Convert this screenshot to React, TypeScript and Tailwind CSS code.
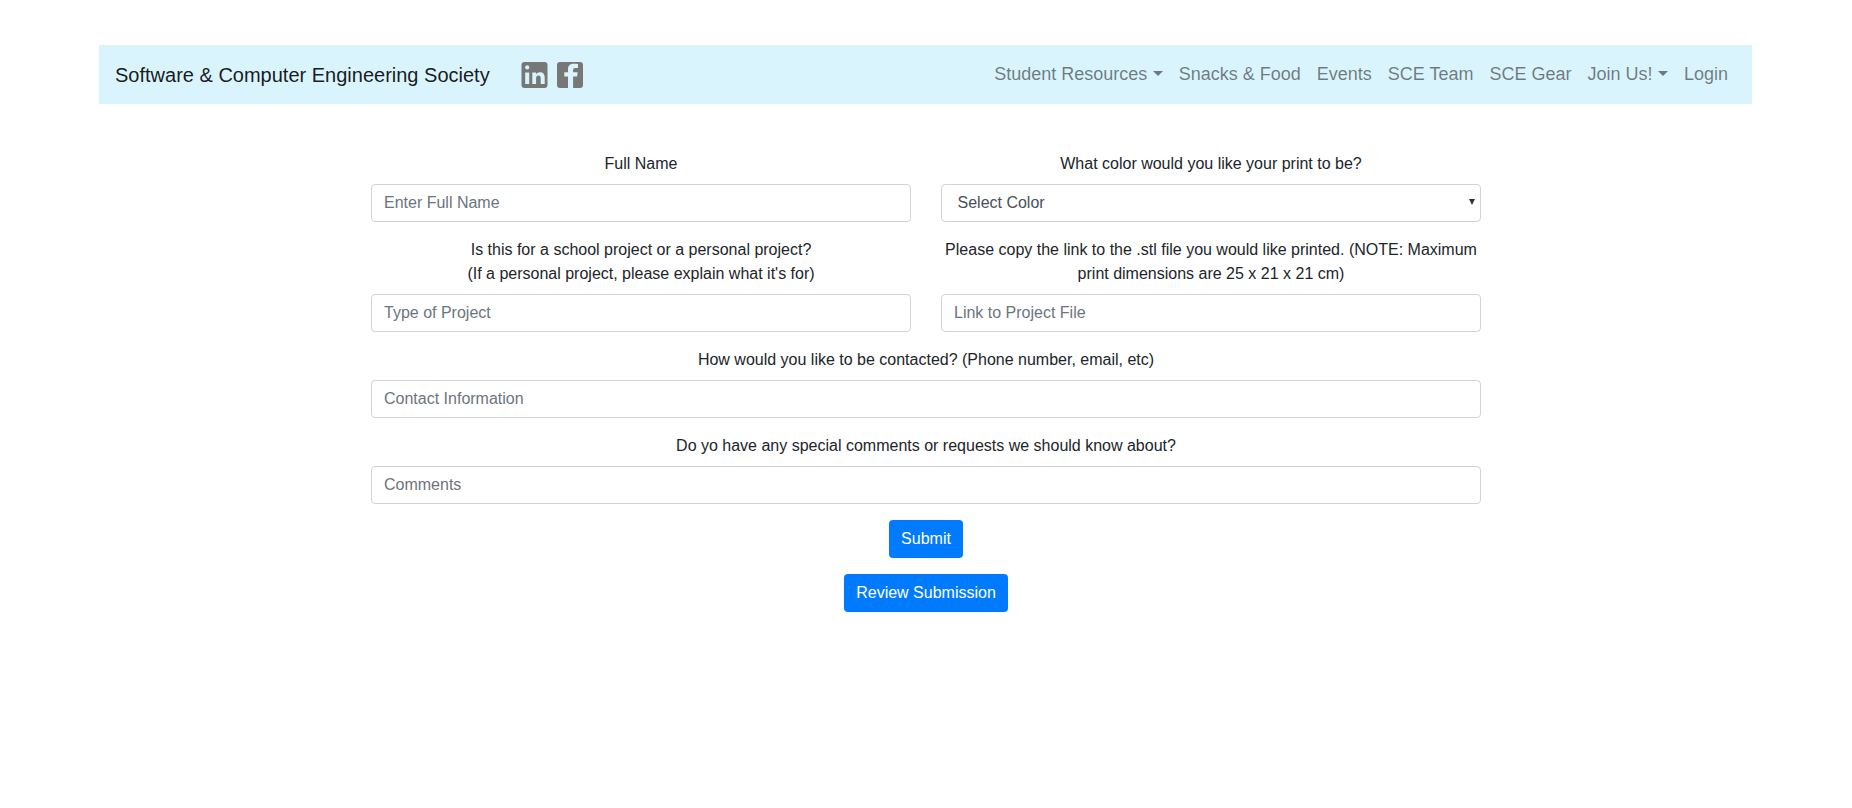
const inputClass =
  "block w-full h-[38px] px-3 py-1.5 border border-[#ced4da] rounded bg-white text-base text-[#495057] placeholder:text-[#6c757d] outline-none";

const squarePath = "M3 0H23a3 3 0 0 1 3 3V23a3 3 0 0 1-3 3H3a3 3 0 0 1-3-3V3a3 3 0 0 1 3-3z";

function LinkedinIcon() {
  return (
    <svg viewBox="0 0 26 26" className="w-[27px] h-[26px]" fill="currentColor">
      <path
        fillRule="evenodd"
        d={`${squarePath}M3.7 10.5h4v11.5h-4zM5.7 3.3a2.1 2.1 0 1 0 0 4.2a2.1 2.1 0 1 0 0-4.2zM10.8 10.5h3.8v1.7c.8-1.3 2.2-2 4-2 3.2 0 4.6 2 4.6 5.2V22h-4v-6c0-1.7-.7-2.6-2.2-2.6-1.6 0-2.4 1-2.4 2.7V22h-3.8z`}
      />
    </svg>
  );
}

function FacebookIcon() {
  return (
    <svg viewBox="0 0 26 26" className="w-[26px] h-[26px] ml-[9px]" fill="currentColor">
      <path
        fillRule="evenodd"
        d={`${squarePath}M11 26V14.5H7.3v-4.3H11V7.3C11 3.6 13.2 1.8 16.5 1.8c1.6 0 3 .1 4.5.3v3.9h-2.5c-1.9 0-2.4.9-2.4 2.3v1.9h4.6l-.6 4.3h-4V26z`}
      />
    </svg>
  );
}

function Field({ label, placeholder }: { label: React.ReactNode; placeholder: string }) {
  return (
    <div className="mb-4 flex flex-col">
      <label className="block mb-2 text-center leading-6">{label}</label>
      <input type="text" placeholder={placeholder} className={inputClass} />
    </div>
  );
}

function Caret() {
  return <span className="ml-[5.4px] mb-[3px] border-t-[5.4px] border-x-[5.4px] border-x-transparent border-t-[#00000080]" />;
}

export default function App() {
  const links = ["Snacks & Food", "Events", "SCE Team", "SCE Gear"];
  return (
    <div className="min-h-[808px] bg-white font-['Liberation_Sans',Arial,sans-serif] text-base text-[#212529]">
      {/* Navbar */}
      <div className="pt-[45px]">
        <nav className="ml-[99px] w-[1653px] h-[59px] bg-[#d9f4fc] px-4 flex items-center justify-between">
          <div className="flex items-center">
            <span className="text-[20px] leading-[30px] text-[#000000e6]">Software &amp; Computer Engineering Society</span>
            <div className="flex items-center ml-[31px] text-[#777777]">
              <LinkedinIcon />
              <FacebookIcon />
            </div>
          </div>
          <ul className="flex items-center text-[18px] leading-[27px] text-[#00000080]">
            <li className="px-2 flex items-center">
              Student Resources
              <Caret />
            </li>
            {links.map((link) => (
              <li key={link} className="px-2">{link}</li>
            ))}
            <li className="px-2 flex items-center">
              Join Us!
              <Caret />
            </li>
            <li className="px-2">Login</li>
          </ul>
        </nav>
      </div>

      {/* Form */}
      <form className="mx-auto w-[1110px] mt-[48px]">
        <div className="grid grid-cols-2 gap-x-[30px]">
          <Field label="Full Name" placeholder="Enter Full Name" />
          <div className="mb-4 flex flex-col">
            <label className="block mb-2 text-center leading-6">What color would you like your print to be?</label>
            <div className="relative">
              <select className={`${inputClass} appearance-none pl-[15.5px]`} defaultValue="">
                <option value="">Select Color</option>
                <option value="red">Red</option>
                <option value="blue">Blue</option>
              </select>
              <span className="absolute right-[6px] top-[15px] border-t-[6px] border-x-[3.5px] border-x-transparent border-t-[#333333] pointer-events-none" />
            </div>
          </div>
          <Field
            label={
              <>
                Is this for a school project or a personal project?
                <br />
                (If a personal project, please explain what it's for)
              </>
            }
            placeholder="Type of Project"
          />
          <Field
            label="Please copy the link to the .stl file you would like printed. (NOTE: Maximum print dimensions are 25 x 21 x 21 cm)"
            placeholder="Link to Project File"
          />
        </div>
        <Field label="How would you like to be contacted? (Phone number, email, etc)" placeholder="Contact Information" />
        <Field label="Do yo have any special comments or requests we should know about?" placeholder="Comments" />
        <div className="flex flex-col items-center gap-4">
          <button type="button" className="h-[38px] px-[12.5px] rounded bg-[#007bff] text-white">Submit</button>
          <button type="button" className="h-[38px] px-[12.5px] rounded bg-[#007bff] text-white">Review Submission</button>
        </div>
      </form>
    </div>
  );
}
